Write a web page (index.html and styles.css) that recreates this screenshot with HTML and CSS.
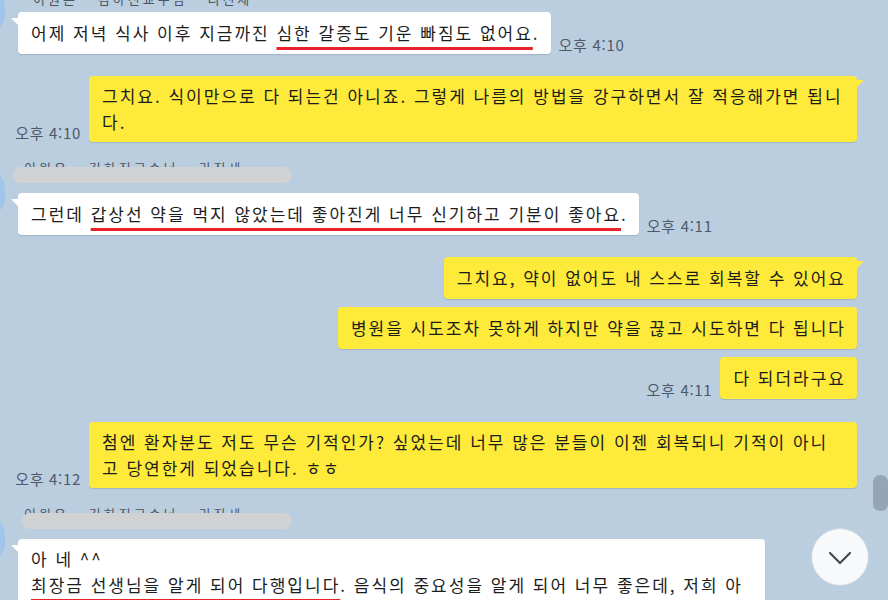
FILE: index.html
```html
<!DOCTYPE html>
<html lang="ko">
<head>
<meta charset="utf-8">
<title>채팅</title>
<link rel="stylesheet" href="styles.css">
</head>
<body>
<div class="chat">
  <div class="group group-first">
    <div class="avatar avatar-first"></div>
    <div class="col">
      <div class="name-top">이원은 · 김하진교수님 · 리진세</div>
      <div class="row">
        <div class="bubble white tail-l">어제 저녁 식사 이후 지금까진 <span class="ul">심한 갈증도 기운 빠짐도 없어요</span>.</div>
        <span class="time">오후 4:10</span>
      </div>
    </div>
  </div>

  <div class="row right mt22">
    <span class="time">오후 4:10</span>
    <div class="bubble yellow tail-r multi">그치요. 식이만으로 다 되는건 아니죠. 그렇게 나름의 방법을 강구하면서 잘 적응해가면 됩니다.</div>
  </div>

  <div class="group mt18">
    <div class="avatar"></div>
    <div class="col">
      <div class="name">이원은 · 김하진교수님 · 리진세<span class="blur"></span></div>
      <div class="row">
        <div class="bubble white tail-l">그런데 <span class="ul">갑상선 약을 먹지 않았는데 좋아진게 너무 신기하고 기분이 좋아요</span>.</div>
        <span class="time">오후 4:11</span>
      </div>
    </div>
  </div>

  <div class="row right mt22">
    <div class="bubble yellow tail-r">그치요, 약이 없어도 내 스스로 회복할 수 있어요</div>
  </div>
  <div class="row right mt8">
    <div class="bubble yellow">병원을 시도조차 못하게 하지만 약을 끊고 시도하면 다 됩니다</div>
  </div>
  <div class="row right mt8">
    <span class="time">오후 4:11</span>
    <div class="bubble yellow">다 되더라구요</div>
  </div>

  <div class="row right mt23">
    <span class="time">오후 4:12</span>
    <div class="bubble yellow multi">첨엔 환자분도 저도 무슨 기적인가? 싶었는데 너무 많은 분들이 이젠 회복되니 기적이 아니고 당연한게 되었습니다. ㅎㅎ</div>
  </div>

  <div class="group mt18">
    <div class="avatar"></div>
    <div class="col">
      <div class="name">이원은 · 김하진교수님 · 리진세<span class="blur blur-2"></span></div>
      <div class="row">
        <div class="bubble white tail-l multi left-wide">아 네 ^^<br><span class="ul">최장금 선생님을 알게 되어 다행입니다</span>. 음식의 중요성을 알게 되어 너무 좋은데, 저희 아이들에게도 이렇게 식이를 알려주면 좋겠다는 생각이 들어서 여쭤봅니다.</div>
      </div>
    </div>
  </div>
</div>

<div class="thumb"></div>
<button class="down" type="button" aria-label="아래로">
  <svg width="24" height="14" viewBox="0 0 24 14"><polyline points="2,2 12,12 22,2" fill="none" stroke="#474b50" stroke-width="2.2" stroke-linecap="round" stroke-linejoin="round"/></svg>
</button>
</body>
</html>
```

FILE: styles.css
```css
html, body {
  margin: 0;
  padding: 0;
}
body {
  background: #bacee0;
  font-family: "Noto Sans CJK KR", "Noto Sans", sans-serif;
  color: #1d1d1d;
  width: 888px;
  height: 600px;
  overflow: hidden;
  position: relative;
}
.chat {
  height: 600px;
  overflow: hidden;
  display: flex;
  flex-direction: column;
}
.group {
  display: flex;
  align-items: flex-start;
}
.avatar {
  flex: none;
  width: 46px;
  height: 46px;
  margin-left: -41px;
  margin-top: 10px;
  border-radius: 18px;
  background: #a2c6ea;
}
.avatar-first {
  margin-top: -13px;
}
.col {
  margin-left: 13px;
  display: flex;
  flex-direction: column;
}
.name-top {
  margin-top: -9px;
  height: 21px;
  font-size: 13px;
  line-height: 16px;
  color: #4d5560;
  padding-left: 15px;
  white-space: nowrap;
  letter-spacing: 3px;
}
.name {
  position: relative;
  height: 33px;
  font-size: 13px;
  line-height: 16px;
  color: #4d5560;
  padding-left: 6px;
  white-space: nowrap;
  letter-spacing: 3px;
}
.blur {
  position: absolute;
  left: -5px;
  top: 7px;
  width: 279px;
  height: 16px;
  border-radius: 8px;
  background: #d1d2d4;
}
.blur-2 {
  left: 4px;
  width: 270px;
}
.row {
  display: flex;
  align-items: flex-end;
  gap: 8px;
}
.row.right {
  justify-content: flex-end;
  padding-right: 31px;
}
.mt8 { margin-top: 8px; }
.mt18 { margin-top: 18px; }
.mt22 { margin-top: 22px; }
.mt23 { margin-top: 23px; }
.bubble {
  position: relative;
  font-size: 17px;
  line-height: 26px;
  letter-spacing: 2px;
  padding: 8px 11px 8px 13px;
  border-radius: 4px;
  box-shadow: 0 1px 1px rgba(0, 0, 0, 0.13);
  max-width: 742px;
  box-sizing: content-box;
}
.bubble.multi {
  padding-top: 7px;
  padding-bottom: 7px;
}
.yellow.multi {
  padding-right: 13px;
}
.bubble.left-wide {
  max-width: 723px;
  width: 723px;
}
.white {
  background: #ffffff;
}
.yellow {
  background: #feea3a;
}
.tail-l::before {
  content: "";
  position: absolute;
  left: -7px;
  top: 6px;
  border-top: 7px solid #ffffff;
  border-left: 7px solid transparent;
}
.tail-r::before {
  content: "";
  position: absolute;
  right: -7px;
  top: 4px;
  border-top: 7px solid #feea3a;
  border-right: 7px solid transparent;
}
.ul {
  text-decoration: underline;
  text-decoration-color: #e8232b;
  text-decoration-thickness: 2.5px;
  text-underline-offset: 7px;
  text-decoration-skip-ink: none;
}
.time {
  flex: none;
  font-size: 15px;
  line-height: 18px;
  letter-spacing: 0.7px;
  color: #4f5967;
  white-space: nowrap;
}
.thumb {
  position: absolute;
  right: 0;
  top: 475px;
  width: 15px;
  height: 36px;
  border-radius: 7px;
  background: #95a5b6;
}
.down {
  position: absolute;
  left: 811px;
  top: 528px;
  width: 58px;
  height: 58px;
  border-radius: 50%;
  border: 1px solid #c9d3de;
  background: #f8f9fb;
  padding: 0;
  display: flex;
  align-items: center;
  justify-content: center;
}
.down svg {
  display: block;
  margin-top: 2px;
}
```
